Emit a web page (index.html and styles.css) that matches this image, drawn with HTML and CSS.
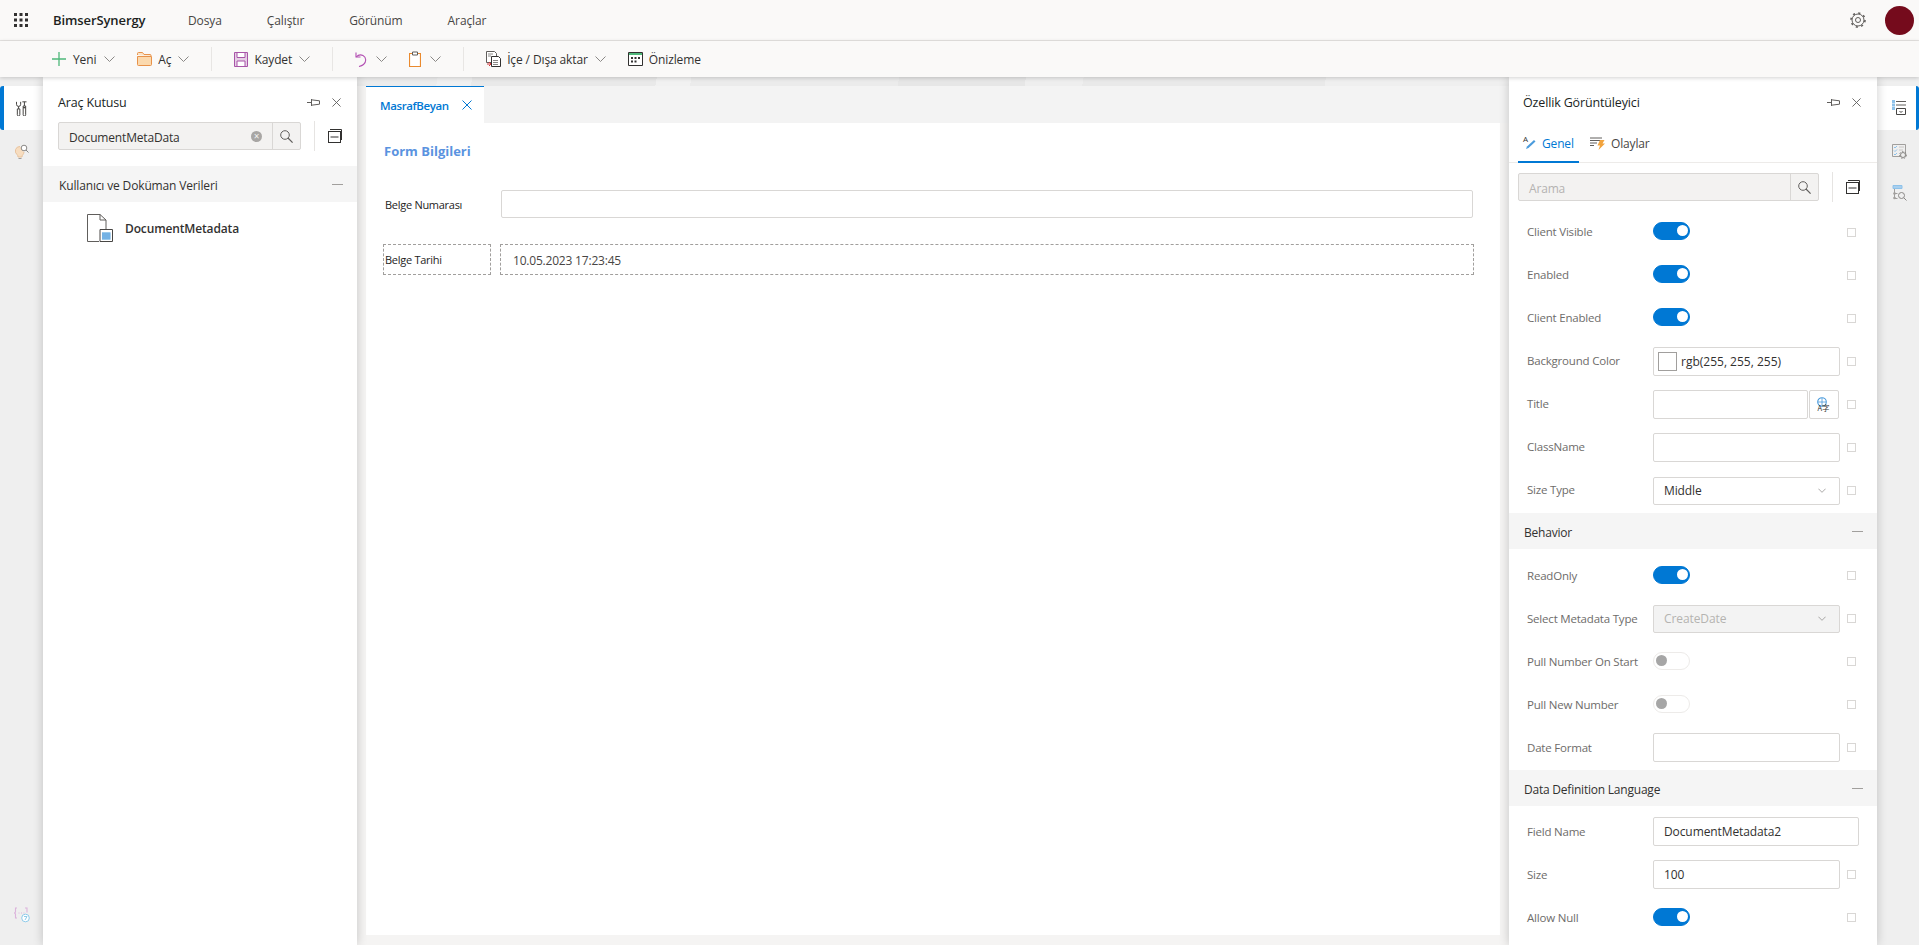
FILE: index.html
```html
<!DOCTYPE html>
<html lang="tr">
<head>
<meta charset="utf-8">
<title>BimserSynergy</title>
<link rel="stylesheet" href="styles.css">
</head>
<body>
<svg class="defs" width="0" height="0" aria-hidden="true">
  <symbol id="chev" viewBox="0 0 11 6"><path d="M.5.5 5.500 5.500 10.500.5" fill="none" stroke="#8a8886"/></symbol>
  <symbol id="close" viewBox="0 0 10 10"><path d="M.5.5l9 9M9.500.5l-9 9" fill="none" stroke="currentColor"/></symbol>
  <symbol id="pin" viewBox="0 0 13 9"><path d="M0 4.500h4M4.500 1v7M4.500 1.800l8 1v3.400l-8 1" fill="none" stroke="#605e5c"/></symbol>
  <symbol id="search" viewBox="0 0 13 13"><circle cx="5" cy="5" r="4.300" fill="none" stroke="#605e5c"/><path d="M8 8l4.600 4.600" stroke="#605e5c" stroke-width="1.200"/></symbol>
  <symbol id="collapse" viewBox="0 0 14 14"><path d="M2 .5h11.500V11" fill="none" stroke="#323130"/><rect x=".5" y="2.500" width="12" height="11" fill="#fff" stroke="#323130"/><path d="M2.500 8h8" stroke="#323130"/></symbol>
</svg>

<header class="topbar">
  <svg class="waffle" width="14" height="14" viewBox="0 0 14 14"><g fill="#323130"><rect width="3" height="3"/><rect x="5.500" width="3" height="3"/><rect x="11" width="3" height="3"/><rect y="5.500" width="3" height="3"/><rect x="5.500" y="5.500" width="3" height="3"/><rect x="11" y="5.500" width="3" height="3"/><rect y="11" width="3" height="3"/><rect x="5.500" y="11" width="3" height="3"/><rect x="11" y="11" width="3" height="3"/></g></svg>
  <span class="brand">BimserSynergy</span>
  <nav class="menu"><span>Dosya</span><span>Çalıştır</span><span>Görünüm</span><span>Araçlar</span></nav>
  <svg class="gear" width="16" height="16" viewBox="0 0 16 16"><circle cx="8" cy="8" r="6" fill="none" stroke="#605e5c" stroke-width="1"/><circle cx="8" cy="8" r="7" fill="none" stroke="#605e5c" stroke-width="1.600" stroke-dasharray="2.200 3.300"/><circle cx="8" cy="8" r="2.500" fill="none" stroke="#605e5c"/></svg>
  <span class="avatar"></span>
</header>

<div class="toolbar">
  <div class="tb-item">
    <svg width="14" height="14" viewBox="0 0 14 14"><path d="M7 0v14M0 7h14" stroke="#4fb87a" stroke-width="1.300"/></svg>
    <span>Yeni</span><svg class="chev" width="11" height="6"><use href="#chev"/></svg>
  </div>
  <div class="tb-item tb-narrow">
    <svg width="15" height="14" viewBox="0 0 15 14"><path d="M.5 3V1.500a1 1 0 0 1 1-1h4l1.500 2h6a1 1 0 0 1 1 1V4" fill="#fbe3c6" stroke="#e8924a"/><path d="M.5 4.500h14v8a1 1 0 0 1-1 1h-12a1 1 0 0 1-1-1z" fill="#fbd9ae" stroke="#e8924a"/></svg>
    <span>Aç</span><svg class="chev" width="11" height="6"><use href="#chev"/></svg>
  </div>
  <i class="tb-sep"></i>
  <div class="tb-item tb-narrow">
    <svg width="14" height="15" viewBox="0 0 14 15"><path d="M.5.500h13v14H.5z" fill="#e6cfe6" stroke="#a855a8"/><path d="M3 .5h8v5H3z" fill="#fff" stroke="#a855a8"/><path d="M3 9h8v5.500H3z" fill="#fff" stroke="#a855a8"/></svg>
    <span>Kaydet</span><svg class="chev" width="11" height="6"><use href="#chev"/></svg>
  </div>
  <i class="tb-sep"></i>
  <div class="tb-item tb-icon-only">
    <svg width="12" height="15" viewBox="0 0 12 15"><path d="M1 .5V5h4.500" fill="none" stroke="#b24fb2" stroke-width="1.100"/><path d="M1.200 5C3 3 6 2.500 8 3.500c3.500 1.800 3.500 6.500.5 9-1.200 1-2.700 1.600-4.500 2" fill="none" stroke="#b24fb2" stroke-width="1.100"/></svg>
    <svg class="chev" width="11" height="6"><use href="#chev"/></svg>
  </div>
  <div class="tb-item tb-icon-only">
    <svg width="12" height="16" viewBox="0 0 12 16"><path d="M.5 2.500h11v13H.5z" fill="#fff" stroke="#ea8a2e" stroke-width="1.200"/><path d="M3.500 4V1h5v3z" fill="#fff" stroke="#605e5c"/></svg>
    <svg class="chev" width="11" height="6"><use href="#chev"/></svg>
  </div>
  <i class="tb-sep"></i>
  <div class="tb-item tb-tight">
    <svg width="15" height="16" viewBox="0 0 15 16"><path d="M.5.500h8l2 2v9H.5z" fill="#fff" stroke="#605e5c"/><path d="M5.500 5.500h7l2 2v8h-9z" fill="#fff" stroke="#323130"/><path d="M2 3h5M2 5h3M7 9.500h5M7 11.500h5M7 13.500h5" stroke="#8a8886"/><path d="M1 13h3.500M3 11l2 2-2 2" fill="none" stroke="#d13438"/></svg>
    <span>İçe / Dışa aktar</span><svg class="chev" width="11" height="6"><use href="#chev"/></svg>
  </div>
  <div class="tb-item tb-tight">
    <svg width="15" height="14" viewBox="0 0 15 14"><path d="M.5.500h14v13H.5z" fill="#fff" stroke="#323130"/><path d="M1 1h13v2H1z" fill="#4fb87a"/><path d="M3 5h2v2H3zM6.500 5h2v2h-2zM10 5h2v2h-2zM3 8.500h2v2H3zM6.500 8.500h2v2h-2z" fill="#323130"/></svg>
    <span>Önizleme</span>
  </div>
</div>

<div class="workspace">
  <aside class="rail rail-left">
    <div class="rail-tab rail-tab-on">
      <svg width="13" height="15" viewBox="0 0 14 18"><g fill="none" stroke="#484644" stroke-width="1.200"><path d="M1 1v3a2.500 2.500 0 0 0 5 0V1M3.500 6.500v3M2 9.500h3v7a1.500 1.500 0 0 1-3 0z"/><path d="M8 1h5M10.500 1v5M9 6h3v2H9zM9 8h3v8.500a1.500 1.500 0 0 1-3 0z"/></g></svg>
    </div>
    <div class="rail-tab">
      <svg width="14" height="16" viewBox="0 0 14 16"><path d="M5 2.500a4.500 4.500 0 0 0-3 8c.7.7 1 1.500 1 2.500h4c0-1 .300-1.800 1-2.500a4.500 4.500 0 0 0 1-2.500" fill="#f7ddc0" stroke="#e8c39e"/><path d="M3.500 14.500h3" stroke="#a19f9d"/><circle cx="9" cy="4" r="2.800" fill="#fff" stroke="#8a8886"/><path d="M11 6l2.500 2.500" stroke="#8a8886"/></svg>
    </div>
    <svg class="rail-foot" width="16" height="16" viewBox="0 0 16 16"><path d="M3 1H1.500v4l-1 1 1 1v4H3M11 1h2v4.500" fill="none" stroke="#dcb4dc" stroke-width="1.100"/><path d="M4.500 6h1M7 6h1M9.500 6h1" stroke="#dcb4dc"/><circle cx="11.500" cy="11" r="3.800" fill="#fff" stroke="#8ecbea"/><path d="M10 9.500h3l-2 3.500" fill="none" stroke="#8ecbea"/></svg>
  </aside>

  <section class="panel panel-left">
    <div class="lp-head">
      <span class="panel-title">Araç Kutusu</span>
      <svg class="pin" width="13" height="9"><use href="#pin"/></svg>
      <svg class="close" width="9" height="9"><use href="#close"/></svg>
    </div>
    <div class="search-row">
      <div class="search search-l">
        <span class="search-text">DocumentMetaData</span>
        <span class="clear">×</span>
        <span class="search-btn"><svg width="13" height="13"><use href="#search"/></svg></span>
      </div>
      <i class="vsep"></i>
      <svg class="collapse" width="14" height="14"><use href="#collapse"/></svg>
    </div>
    <div class="group-head group-l"><span>Kullanıcı ve Doküman Verileri</span><i class="minus"></i></div>
    <div class="tool-item">
      <svg width="26" height="28" viewBox="0 0 26 28"><path d="M19 15V6l-6-5.500H.5v27H12" fill="#fff" stroke="#605e5c"/><path d="M13 .5V6h6" fill="none" stroke="#605e5c"/><path d="M13 15.500h12.500v12H13z" fill="#fff" stroke="#484644"/><path d="M15 18h8.500v8H15z" fill="#9ccaec"/><path d="M15 20h8.500M15 22h8.500M15 24h8.500" stroke="#2b88d8" stroke-width=".7"/></svg>
      <span>DocumentMetadata</span>
    </div>
  </section>

  <main class="main">
    <div class="strip">
      <div class="tab"><span>MasrafBeyan</span><svg class="tab-x" width="10" height="10"><use href="#close"/></svg></div>
    </div>
    <div class="canvas">
      <h2 class="form-title">Form Bilgileri</h2>
      <div class="f-row">
        <label class="f-label">Belge Numarası</label>
        <div class="f-input"></div>
      </div>
      <div class="f-row f-row-sel">
        <label class="f-label f-dash">Belge Tarihi</label>
        <div class="f-input f-dash"><span class="f-value">10.05.2023 17:23:45</span></div>
      </div>
    </div>
  </main>

  <section class="panel panel-right">
    <div class="rp-head">
      <span class="panel-title">Özellik Görüntüleyici</span>
      <svg class="pin" width="13" height="9"><use href="#pin"/></svg>
      <svg class="close" width="9" height="9"><use href="#close"/></svg>
    </div>
    <div class="rp-tabs">
      <div class="rp-tab rp-tab-on">
        <span class="ico-genel"><span class="ico-a">A</span><svg width="13" height="14" viewBox="0 0 13 14"><path d="M3 13l1-2.500L11 4l1.500 1.500L5.500 12z" fill="#4a9bdc"/></svg></span>
        <span>Genel</span>
      </div>
      <div class="rp-tab">
        <svg width="15" height="13" viewBox="0 0 15 13"><path d="M0 1h12M0 3.500h10M0 6h7M0 8.500h4" stroke="#605e5c"/><path d="M10 3h4.500l-2 3.500H15L8.500 13l1.500-4.500H7.500z" fill="#f2a33c"/></svg>
        <span>Olaylar</span>
      </div>
    </div>
    <div class="search-row search-row-r">
      <div class="search search-r">
        <span class="search-text placeholder">Arama</span>
        <span class="search-btn"><svg width="13" height="13"><use href="#search"/></svg></span>
      </div>
      <i class="vsep"></i>
      <svg class="collapse" width="14" height="14"><use href="#collapse"/></svg>
    </div>

    <div class="props props-first">
      <div class="row"><span class="lbl">Client Visible</span><span class="ctl"><i class="toggle on"></i></span><i class="cb"></i></div>
      <div class="row"><span class="lbl">Enabled</span><span class="ctl"><i class="toggle on"></i></span><i class="cb"></i></div>
      <div class="row"><span class="lbl">Client Enabled</span><span class="ctl"><i class="toggle on"></i></span><i class="cb"></i></div>
      <div class="row"><span class="lbl">Background Color</span><span class="ctl"><span class="input color"><i class="swatch"></i>rgb(255, 255, 255)</span></span><i class="cb"></i></div>
      <div class="row"><span class="lbl">Title</span><span class="ctl ctl-join"><span class="input"></span><span class="trans"><span class="trans-ico"><svg width="10" height="10" viewBox="0 0 10 10"><circle cx="5" cy="5" r="4.300" fill="none" stroke="#4a9bdc" stroke-width="1.100"/><path d="M1 5h8M5 1v8" stroke="#4a9bdc" stroke-width=".8"/></svg><span class="trans-txt">A字</span></span></span></span><i class="cb"></i></div>
      <div class="row"><span class="lbl">ClassName</span><span class="ctl"><span class="input"></span></span><i class="cb"></i></div>
      <div class="row"><span class="lbl">Size Type</span><span class="ctl"><span class="input select">Middle<svg width="8" height="5"><use href="#chev"/></svg></span></span><i class="cb"></i></div>
    </div>
    <div class="group-head"><span>Behavior</span><i class="minus"></i></div>
    <div class="props props-after">
      <div class="row"><span class="lbl">ReadOnly</span><span class="ctl"><i class="toggle on"></i></span><i class="cb"></i></div>
      <div class="row"><span class="lbl">Select Metadata Type</span><span class="ctl"><span class="input select disabled">CreateDate<svg width="8" height="5"><use href="#chev"/></svg></span></span><i class="cb"></i></div>
      <div class="row"><span class="lbl">Pull Number On Start</span><span class="ctl"><i class="toggle"></i></span><i class="cb"></i></div>
      <div class="row"><span class="lbl">Pull New Number</span><span class="ctl"><i class="toggle"></i></span><i class="cb"></i></div>
      <div class="row"><span class="lbl">Date Format</span><span class="ctl"><span class="input"></span></span><i class="cb"></i></div>
    </div>
    <div class="group-head"><span>Data Definition Language</span><i class="minus"></i></div>
    <div class="props props-last">
      <div class="row"><span class="lbl">Field Name</span><span class="ctl ctl-wide"><span class="input">DocumentMetadata2</span></span></div>
      <div class="row"><span class="lbl">Size</span><span class="ctl"><span class="input">100</span></span><i class="cb"></i></div>
      <div class="row"><span class="lbl">Allow Null</span><span class="ctl"><i class="toggle on"></i></span><i class="cb"></i></div>
    </div>
  </section>

  <aside class="rail rail-right">
    <div class="rail-tab rail-tab-on">
      <svg width="14" height="16" viewBox="0 0 14 16"><path d="M4 1.500h10M4 5h10" stroke="#605e5c"/><path d="M0 0h3v3H0zM0 3.500h3v3H0zM0 7h3v3H0z" fill="#8ec2ea"/><path d="M4.500 8.500h9v6h-9z" fill="#fff" stroke="#484644"/><path d="M7.500 11l1.500 1.500 1.500-1.500" fill="none" stroke="#484644"/></svg>
    </div>
    <div class="rail-tab">
      <svg width="15" height="15" viewBox="0 0 15 15"><path d="M.5.500h13v12H.5z" fill="none" stroke="#a19f9d"/><path d="M2 3l1 1 2-2M2 6.500l1 1 2-2M2 10l1 1 2-2" fill="none" stroke="#8ec2ea"/><path d="M7 3h5M7 6h4" stroke="#c8c6c4"/><circle cx="11" cy="11" r="2.500" fill="#eee" stroke="#8a8886"/><circle cx="11" cy="11" r="3.500" fill="none" stroke="#8a8886" stroke-dasharray="1.500 1.500"/></svg>
    </div>
    <div class="rail-tab">
      <svg width="15" height="16" viewBox="0 0 15 16"><path d="M1 .5h9v3H1z" fill="#a9cfee" stroke="#8ec2ea"/><path d="M2.500 4v9.500h3M2.500 8.500h3" fill="none" stroke="#a19f9d"/><circle cx="2.500" cy="8.500" r="1.300" fill="#a19f9d"/><circle cx="2.500" cy="13" r="1.300" fill="#a19f9d"/><circle cx="9.500" cy="10.500" r="3" fill="none" stroke="#8a8886"/><path d="M11.800 12.800l2.700 2.700" stroke="#8a8886"/></svg>
    </div>
  </aside>
</div>
</body>
</html>
```

FILE: styles.css
```css
* { box-sizing: border-box; }
html, body { height: 100%; }
body {
  margin: 0;
  height: 945px;
  overflow: hidden;
  display: flex;
  flex-direction: column;
  background: #efefef;
  color: #323130;
  font-family: "Open Sans", "Noto Sans", "Liberation Sans", sans-serif;
  font-size: 12px;
}
.defs { position: absolute; }
i { display: block; }

/* top bar */
.topbar {
  height: 41px;
  flex: none;
  display: flex;
  align-items: center;
  padding-left: 14px;
  background: #faf9f8;
  border-bottom: 1px solid #e6e4e2;
}
.waffle { margin-right: 25px; }
.brand { font-weight: 600; font-size: 13px; color: #201f1e; letter-spacing: -.1px; width: 135px; }
.menu { display: flex; gap: 45px; flex: 1; color: #484644; letter-spacing: -.1px; }
.gear { margin-right: 19px; }
.avatar { width: 29px; height: 29px; border-radius: 50%; background: #750b1c; margin-right: 5px; }

/* toolbar */
.toolbar {
  height: 36px;
  flex: none;
  display: flex;
  align-items: center;
  gap: 22px;
  padding-left: 52px;
  background: #faf9f8;
  box-shadow: 0 1px 4px rgba(0,0,0,.18);
  position: relative;
  z-index: 3;
  color: #323130;
  letter-spacing: -.12px;
}
.tb-item { display: flex; align-items: center; gap: 7px; }
.tb-item .chev { margin-left: 1px; }
.tb-narrow { gap: 6px; }
.tb-icon-only { gap: 8px; }
.tb-tight { gap: 6px; }
.tb-sep { width: 1px; height: 24px; background: #e8e6e4; }

/* workspace */
.workspace { flex: 1; min-height: 0; display: flex; }
.rail { width: 43px; flex: none; position: relative; padding-top: 9px; background: #efefef; }
.rail-right { width: 42px; }
.rail-tab { height: 44px; display: flex; align-items: center; justify-content: center; }
.rail-tab-on { background: #fff; }
.rail-left .rail-tab-on { border-left: 4px solid #0078d4; border-radius: 3px 0 0 3px; padding-right: 5px; }
.rail-right .rail-tab { height: 42px; padding-left: 2px; }
.rail-right .rail-tab-on { height: 44px; border-right: 3px solid #0078d4; border-radius: 0 3px 3px 0; padding-left: 4px; }
.rail-foot { position: absolute; left: 14px; bottom: 22px; }

.panel { flex: none; background: #fff; box-shadow: 0 0 10px rgba(0,0,0,.2); position: relative; z-index: 2; overflow: hidden; }
.panel-left { width: 314px; }
.panel-right { width: 368px; }
.panel-title { font-size: 12.5px; font-weight: 500; color: #201f1e; letter-spacing: -.15px; flex: 1; }
.pin { color: #605e5c; }
.close { color: #605e5c; }

.lp-head { height: 45px; padding: 6px 16px 1px 15px; display: flex; align-items: center; gap: 12px; }
.rp-head { height: 50px; padding: 0 16px 0 14px; display: flex; align-items: center; gap: 12px; }

.search-row { display: flex; align-items: center; padding-left: 15px; height: 28px; }
.search-row-r { padding-left: 9px; margin-top: 10px; }
.search {
  height: 28px;
  display: flex;
  align-items: center;
  background: #f3f2f1;
  border: 1px solid #d9d7d5;
  border-radius: 2px;
}
.search-l { width: 243px; }
.search-r { width: 301px; }
.search-text { flex: 1; padding: 2px 0 0 10px; color: #323130; letter-spacing: -.17px; white-space: nowrap; }
.placeholder { color: #b5b3b1; }
.clear {
  width: 11px; height: 11px; margin-right: 10px;
  border-radius: 50%;
  background: #a8a6a4;
  color: #f3f2f1;
  font-size: 10px; line-height: 11px; text-align: center;
}
.search-btn { width: 28px; height: 26px; border-left: 1px solid #d9d7d5; display: flex; align-items: center; justify-content: center; }
.vsep { width: 1px; height: 30px; background: #e6e4e2; margin: 0 13px; }
.group-head {
  height: 36px;
  display: flex;
  align-items: center;
  justify-content: space-between;
  padding: 0 14px 0 15px;
  margin-top: 1px;
  background: #f5f5f5;
  color: #323130;
  letter-spacing: -.22px;
}
.group-head span { padding-top: 2px; }
.group-l { margin-top: 16px; padding-left: 16px; letter-spacing: -.15px; }
.minus { width: 11px; height: 1px; background: #a19f9d; }

.tool-item { height: 52px; padding-left: 44px; display: flex; align-items: center; gap: 12px; font-weight: 600; color: #323130; letter-spacing: -.14px; }

/* main */
.main {
  flex: 1;
  min-width: 0;
  padding: 9px 9px 10px 9px;
  background: linear-gradient(100deg, #ececec 0 7%, #f0f0f0 7% 10%, #e9e9e9 10% 26%, #f1f1f1 26% 29%, #ebebeb 29% 47%, #e6e6e6 47% 58%, #eeeeee 58% 63%, #e9e9e9 63% 84%, #efefef 84%) top / 100% 9px no-repeat #f5f4f3;
  display: flex;
  flex-direction: column;
}
.strip { height: 37px; flex: none; margin-right: -9px; background: #f3f3f3; display: flex; }
.tab {
  width: 118px;
  display: flex;
  align-items: center;
  gap: 13px;
  padding-left: 14px;
  background: #fff;
  border-top: 1px solid #0078d4;
  color: #0078d4;
  font-weight: 600;
  font-size: 11.5px;
  letter-spacing: -.4px;
}
.tab-x { color: #0078d4; }
.canvas { flex: 1; background: #fff; padding: 18px 26px 0 17px; }
.form-title { margin: 0 0 29px 1px; font-size: 13px; line-height: 20px; font-weight: 700; color: #5a93e0; }
.f-row { display: flex; gap: 9px; height: 28px; align-items: stretch; }
.f-row-sel { height: 31px; margin-top: 26px; }
.f-label { width: 108px; flex: none; display: flex; align-items: center; padding-left: 2px; font-size: 11px; color: #252423; letter-spacing: -.28px; }
.f-input { flex: 1; margin: 0 1px; border: 1px solid #d9d7d5; border-radius: 2px; }
.f-dash { border: 1px dashed #a19f9d; border-radius: 0; margin: 0; padding-left: 1px; }
.f-input.f-dash { display: flex; align-items: center; padding-left: 12px; color: #484644; font-size: 12px; letter-spacing: -.2px; }
.f-value { padding-top: 2px; }

/* properties */
.rp-tabs { height: 36px; display: flex; padding-left: 9px; gap: 6px; border-bottom: 1px solid #edebe9; }
.rp-tab { display: flex; align-items: center; gap: 6px; padding: 0 5px 4px 5px; height: 36px; color: #484644; letter-spacing: -.15px; }
.rp-tab-on { width: 61px; color: #0078d4; border-bottom: 2px solid #0078d4; padding-bottom: 2px; }
.ico-genel { position: relative; width: 13px; height: 14px; flex: none; }
.ico-a { position: absolute; left: 0; top: -2px; font-size: 8px; line-height: 10px; color: #323130; }
.props { padding-top: 10px; }
.props-after { padding-top: 5px; }
.props-last { padding-top: 4px; }
.row { height: 43px; display: flex; align-items: center; padding-left: 18px; }
.props-first .lbl { padding-bottom: 2px; }
.lbl { width: 126px; flex: none; color: #6e6c6a; font-size: 11.5px; letter-spacing: -.2px; white-space: nowrap; }
.ctl { width: 187px; flex: none; display: flex; align-items: center; }
.ctl-wide { width: 206px; }
.ctl-join { gap: 1px; }
.input {
  flex: 1;
  min-width: 0;
  height: 29px;
  display: flex;
  align-items: center;
  padding: 0 10px;
  background: #fff;
  border: 1px solid #d9d7d5;
  border-radius: 2px;
  color: #323130;
  letter-spacing: -.1px;
}
.color { padding-left: 4px; gap: 4px; letter-spacing: 0; }
.swatch { width: 19px; height: 19px; background: #fff; border: 1px solid #a19f9d; }
.trans { width: 30px; height: 29px; border: 1px solid #d9d7d5; border-radius: 2px; display: flex; align-items: center; justify-content: center; margin-right: 1px; }
.trans-ico { position: relative; width: 15px; height: 15px; }
.trans-ico svg { display: block; }
.trans-txt { position: absolute; left: 1px; top: 7px; font-family: "Noto Sans CJK SC", "Open Sans", sans-serif; font-size: 7.5px; line-height: 8px; color: #323130; white-space: nowrap; }
.select { justify-content: space-between; height: 28px; padding-right: 13px; }
.disabled { background: #f3f3f3; color: #b5b3b1; }
.cb { width: 9px; height: 9px; margin-left: 7px; border: 1px solid #d9d7d5; margin-bottom: 1px; }
.toggle {
  width: 37px; height: 18px;
  margin-bottom: 1px;
  border-radius: 9px;
  border: 1px solid #edebe9;
  background: #fff;
  display: flex;
  align-items: center;
  padding: 0 1px 1px 2px;
}
.props-first .toggle { margin-bottom: 3px; }
.toggle::after { content: ""; width: 11px; height: 11px; border-radius: 50%; background: #a6a6a6; }
.toggle.on { background: #0078d4; border-color: #0078d4; justify-content: flex-end; }
.toggle.on::after { background: #fff; }
```
